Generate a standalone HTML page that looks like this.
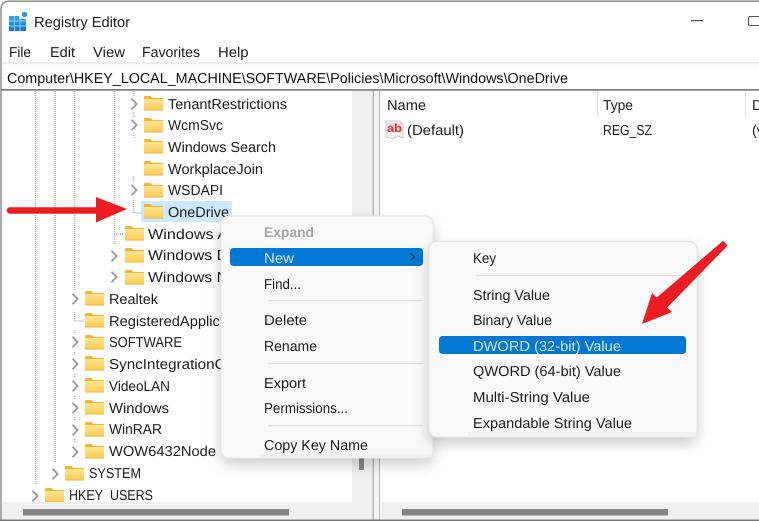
<!DOCTYPE html>
<html><head><meta charset="utf-8"><title>Registry Editor</title>
<style>
html,body{margin:0;padding:0;background:#fff;width:759px;height:521px;overflow:hidden}
svg{display:block}
text{font-family:"Liberation Sans",sans-serif;font-size:14.4px;fill:#1c1c1c;text-rendering:geometricPrecision}
.w{fill:#d8e9f8}
</style></head><body>
<svg xmlns="http://www.w3.org/2000/svg" width="759" height="521" viewBox="0 0 759 521">
<defs>
<linearGradient id="fg" x1="0" y1="0" x2="0" y2="1"><stop offset="0" stop-color="#fee793"/><stop offset="1" stop-color="#fbc94e"/></linearGradient>
<linearGradient id="rg" x1="0" y1="0" x2="0" y2="1"><stop offset="0" stop-color="#38a8ea"/><stop offset="1" stop-color="#0f78c8"/></linearGradient>
<symbol id="f" width="19" height="15" viewBox="0 0 19 15" overflow="visible">
<path d="M0 1.2Q0 0 1.2 0H6.5L8.5 2H19V14.2H0Z" fill="#f9b233"/>
<rect x="0" y="3" width="19" height="11.5" rx=".8" fill="url(#fg)"/>
<rect x="0" y="13.6" width="19" height="1" fill="#f4bb45"/>
</symbol>
<symbol id="c" width="8" height="12" viewBox="0 0 8 12" overflow="visible">
<path d="M1.5 .8L6.6 6L1.5 11.2" fill="none" stroke="#9a9a9a" stroke-width="1.8"/>
</symbol>
<filter id="s1" x="-20%" y="-20%" width="140%" height="140%"><feDropShadow dx="0" dy="6" stdDeviation="7" flood-color="#000" flood-opacity=".2"/></filter>
<filter id="b" x="-2%" y="-2%" width="104%" height="104%"><feGaussianBlur stdDeviation=".3"/></filter>
</defs>
<g filter="url(#b)">
<rect width="759" height="521" fill="#fff"/>
<!-- window frame -->
<path d="M1 521V10Q1 1.5 9 1.2H759" fill="none" stroke="#979797" stroke-width="1.6"/>
<!-- title -->
<g>
<rect x="9" y="16" width="17" height="15" fill="url(#rg)"/>
<path d="M14.5 16V31M20 16V31M9 21H26M9 26H26" stroke="#8fd0f5" stroke-width=".9"/>
<rect x="19" y="11" width="9" height="8" fill="#fff"/>
<circle cx="24.5" cy="14.5" r="2.7" fill="#2a9be0"/>
</g>
<text x="34" y="27" textLength="96" lengthAdjust="spacingAndGlyphs" style="font-size:14.6px">Registry Editor</text>
<rect x="691" y="20" width="12" height="1.2" fill="#555"/>
<rect x="748.5" y="16.5" width="14" height="9" rx="1.5" fill="none" stroke="#555" stroke-width="1.1"/>
<!-- menu -->
<text x="9" y="57" textLength="22" lengthAdjust="spacingAndGlyphs">File</text>
<text x="50" y="57" textLength="25" lengthAdjust="spacingAndGlyphs">Edit</text>
<text x="93" y="57" textLength="32" lengthAdjust="spacingAndGlyphs">View</text>
<text x="142" y="57" textLength="58" lengthAdjust="spacingAndGlyphs">Favorites</text>
<text x="218" y="57" textLength="30.5" lengthAdjust="spacingAndGlyphs">Help</text>
<rect x="2" y="62" width="757" height="2.5" fill="#efefef"/>
<!-- address -->
<text x="7" y="83" textLength="561" lengthAdjust="spacingAndGlyphs" style="fill:#111">Computer\HKEY_LOCAL_MACHINE\SOFTWARE\Policies\Microsoft\Windows\OneDrive</text>
<rect x="1" y="89" width="758" height="1.8" fill="#858585"/>
<!-- tree guide lines -->
<g stroke="#b4b4b4" stroke-width="1.5" stroke-dasharray="1 1" fill="none">
<path d="M35.5 91V485"/>
<path d="M55 91V463"/>
<path d="M74.5 91V290"/>
<path d="M114.5 91V245"/>
<path d="M133.5 200V213H143"/>
<path d="M114 234H124"/>
<path d="M74.5 312V321H84"/>
<path d="M74.5 330V334M74.5 352V356M74.5 374V378M74.5 396V400M74.5 417V421M74.5 439V443"/>
<path d="M133.5 91V96M133.5 112V117M133.5 133V138M133.5 176V181"/>
</g>
<!-- selection -->
<rect x="141" y="201" width="91" height="21" rx="2" fill="#cce8ff"/>
<!-- tree rows -->
<use href="#c" x="130" y="98"/><use href="#f" x="144" y="96"/><text x="168" y="109" textLength="119" lengthAdjust="spacingAndGlyphs">TenantRestrictions</text>
<use href="#c" x="130" y="119"/><use href="#f" x="144" y="118"/><text x="168" y="130" textLength="55" lengthAdjust="spacingAndGlyphs">WcmSvc</text>
<use href="#f" x="144" y="139"/><text x="168" y="152" textLength="108" lengthAdjust="spacingAndGlyphs">Windows Search</text>
<use href="#f" x="144" y="161"/><text x="168" y="174" textLength="95" lengthAdjust="spacingAndGlyphs">WorkplaceJoin</text>
<use href="#c" x="130" y="184"/><use href="#f" x="144" y="183"/><text x="168" y="195" textLength="55" lengthAdjust="spacingAndGlyphs">WSDAPI</text>
<use href="#f" x="144" y="204"/><text x="168" y="217" textLength="61" lengthAdjust="spacingAndGlyphs">OneDrive</text>
<use href="#f" x="125" y="226"/><text x="148" y="239" textLength="80" lengthAdjust="spacingAndGlyphs">Windows A</text>
<use href="#c" x="110" y="250"/><use href="#f" x="125" y="248"/><text x="148" y="260" textLength="80" lengthAdjust="spacingAndGlyphs">Windows D</text>
<use href="#c" x="110" y="271"/><use href="#f" x="125" y="270"/><text x="148" y="282" textLength="80" lengthAdjust="spacingAndGlyphs">Windows N</text>
<use href="#c" x="71" y="293"/><use href="#f" x="85" y="291"/><text x="109" y="304" textLength="49" lengthAdjust="spacingAndGlyphs">Realtek</text>
<use href="#f" x="85" y="313"/><text x="109" y="326" textLength="150" lengthAdjust="spacingAndGlyphs">RegisteredApplications</text>
<use href="#c" x="71" y="336"/><use href="#f" x="85" y="335"/><text x="109" y="347" textLength="73" lengthAdjust="spacingAndGlyphs">SOFTWARE</text>
<use href="#c" x="71" y="358"/><use href="#f" x="85" y="356"/><text x="109" y="369" textLength="152" lengthAdjust="spacingAndGlyphs">SyncIntegrationClients</text>
<use href="#c" x="71" y="380"/><use href="#f" x="85" y="378"/><text x="109" y="391" textLength="61" lengthAdjust="spacingAndGlyphs">VideoLAN</text>
<use href="#c" x="71" y="402"/><use href="#f" x="85" y="400"/><text x="109" y="413" textLength="60" lengthAdjust="spacingAndGlyphs">Windows</text>
<use href="#c" x="71" y="424"/><use href="#f" x="85" y="422"/><text x="109" y="434" textLength="53" lengthAdjust="spacingAndGlyphs">WinRAR</text>
<use href="#c" x="71" y="446"/><use href="#f" x="85" y="444"/><text x="109" y="456" textLength="107" lengthAdjust="spacingAndGlyphs">WOW6432Node</text>
<use href="#c" x="51" y="468"/><use href="#f" x="65" y="466"/><text x="89" y="478" textLength="52" lengthAdjust="spacingAndGlyphs">SYSTEM</text>
<use href="#c" x="31" y="490"/><use href="#f" x="45" y="488"/><text x="69" y="500" textLength="84" lengthAdjust="spacingAndGlyphs">HKEY_USERS</text>
<!-- scrollbars -->
<rect x="352" y="91" width="20" height="411" fill="#f0f0f0"/>
<rect x="359" y="440" width="5" height="30" fill="#858585"/>
<rect x="2" y="502" width="370" height="17" fill="#f0f0f0"/>
<rect x="23" y="509" width="266" height="6.5" fill="#858585"/>
<rect x="372" y="91" width="8" height="429" fill="#f4f4f4"/>
<rect x="372.5" y="91" width="1.5" height="429" fill="#b8b8b8"/>
<rect x="379" y="91" width="1" height="429" fill="#b8b8b8"/>
<rect x="381" y="502" width="378" height="17" fill="#f0f0f0"/>
<rect x="402" y="509" width="266" height="6.5" fill="#858585"/>
<rect x="0" y="519.5" width="759" height="1.5" fill="#777"/>
<!-- list -->
<text x="387" y="110" textLength="39" lengthAdjust="spacingAndGlyphs">Name</text>
<text x="603" y="110" textLength="30" lengthAdjust="spacingAndGlyphs">Type</text>
<text x="752" y="110">D</text>
<rect x="597" y="92" width="1" height="25" fill="#e3e3e3"/>
<rect x="745" y="92" width="1" height="25" fill="#e3e3e3"/>
<path d="M386 121H400L403 124V138L398 136L392 139L386 137Z" fill="#f5f5f5" stroke="#bdbdbd" stroke-width=".8"/>
<rect x="387" y="123" width="15" height="9" fill="#f6d5d5"/>
<text x="387" y="132" textLength="15" lengthAdjust="spacingAndGlyphs" style="font-size:11.5px;font-weight:bold;fill:#e8333b">ab</text>
<text x="407" y="135" textLength="57" lengthAdjust="spacingAndGlyphs">(Default)</text>
<text x="603" y="135" textLength="49" lengthAdjust="spacingAndGlyphs">REG_SZ</text>
<text x="752" y="135">(v</text>
<!-- left red arrow -->
<path d="M10 210.5H98" stroke="#ed1c24" stroke-width="6.5" stroke-linecap="round"/>
<path d="M96 197L127 209L96 222.5Z" fill="#ed1c24"/>
<!-- context menu -->
<rect x="221" y="216" width="212" height="242" rx="8" fill="#f9f9f9" stroke="#e6e6e6" stroke-width="1" filter="url(#s1)"/>
<rect x="260" y="454" width="172" height="3" fill="#f1f1f1"/>
<text x="264" y="237" textLength="50" lengthAdjust="spacingAndGlyphs" style="fill:#a6a6a6;font-weight:bold;font-size:14px">Expand</text>
<rect x="230" y="248" width="193" height="18" rx="3.5" fill="#0078d4"/>
<text class="w" x="264" y="263" textLength="30" lengthAdjust="spacingAndGlyphs">New</text>
<path d="M410.5 253.5L414.5 257L410.5 260.5" fill="none" stroke="#12395c" stroke-width="1.2"/>
<text x="264" y="289" textLength="37" lengthAdjust="spacingAndGlyphs">Find...</text>
<rect x="268" y="300" width="155" height="1.3" fill="#e4e4e4"/>
<text x="264" y="325" textLength="43" lengthAdjust="spacingAndGlyphs">Delete</text>
<text x="264" y="351" textLength="53" lengthAdjust="spacingAndGlyphs">Rename</text>
<rect x="268" y="363" width="155" height="1.3" fill="#e4e4e4"/>
<text x="264" y="388" textLength="42" lengthAdjust="spacingAndGlyphs">Export</text>
<text x="264" y="413" textLength="84" lengthAdjust="spacingAndGlyphs">Permissions...</text>
<rect x="268" y="425" width="155" height="1.3" fill="#e4e4e4"/>
<text x="264" y="450" textLength="104" lengthAdjust="spacingAndGlyphs">Copy Key Name</text>
<!-- submenu -->
<rect x="429" y="241.5" width="268" height="195.5" rx="8" fill="#f9f9f9" stroke="#e6e6e6" stroke-width="1" filter="url(#s1)"/>
<rect x="468" y="432" width="228" height="4" fill="#f1f1f1"/>
<text x="473" y="263" textLength="23" lengthAdjust="spacingAndGlyphs">Key</text>
<rect x="476" y="275" width="210" height="1.3" fill="#e4e4e4"/>
<text x="473" y="300" textLength="77" lengthAdjust="spacingAndGlyphs">String Value</text>
<text x="473" y="325" textLength="79" lengthAdjust="spacingAndGlyphs">Binary Value</text>
<rect x="439" y="336" width="247" height="18" rx="3.5" fill="#0078d4"/>
<text class="w" x="473" y="351" textLength="148" lengthAdjust="spacingAndGlyphs">DWORD (32-bit) Value</text>
<text x="473" y="376" textLength="148" lengthAdjust="spacingAndGlyphs">QWORD (64-bit) Value</text>
<text x="473" y="402" textLength="117" lengthAdjust="spacingAndGlyphs">Multi-String Value</text>
<text x="473" y="428" textLength="159" lengthAdjust="spacingAndGlyphs">Expandable String Value</text>
<!-- right red arrow -->
<path d="M723 241.5L727 245.5L667 307L657 298Z" fill="#ed1c24" stroke="#ed1c24" stroke-width="1" stroke-linejoin="round"/>
<path d="M642 324L652 293L672 312Z" fill="#ed1c24"/>
</g>
</svg>
</body></html>
